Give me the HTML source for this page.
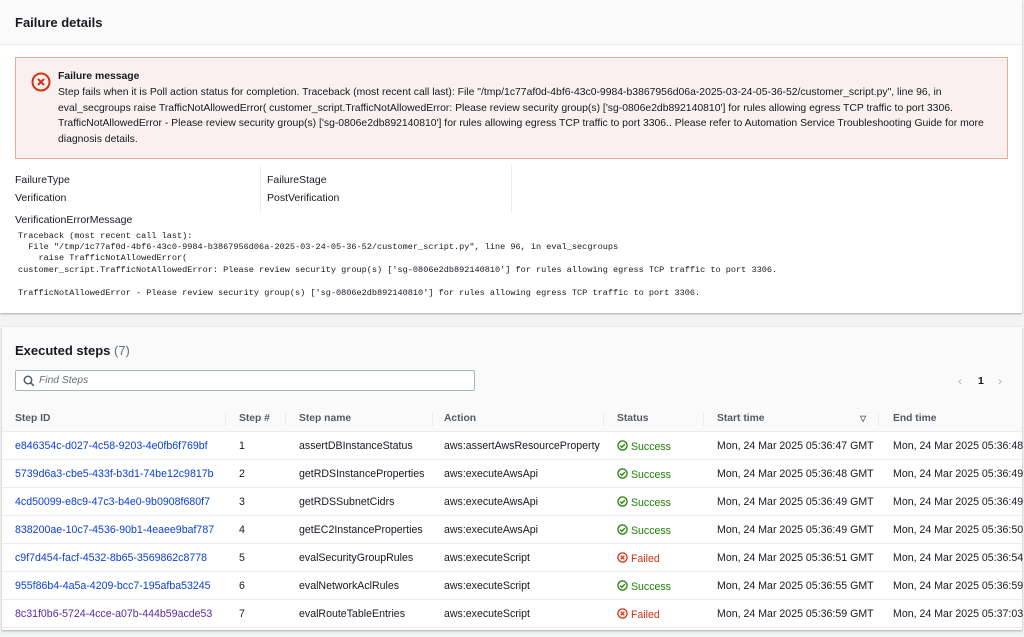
<!DOCTYPE html>
<html><head><meta charset="utf-8"><style>
*{margin:0;padding:0;box-sizing:border-box}
body{width:1024px;height:637px;background:#f2f3f3;font-family:"Liberation Sans",sans-serif;color:#16191f;position:relative;overflow:hidden;font-size:10.5px}
.abs{position:absolute;white-space:nowrap}
.p1{position:absolute;left:0;top:0;width:1022px;height:313px;background:#fff;box-shadow:0 1px 2px rgba(0,0,0,.3)}
.h1{position:absolute;left:0;top:0;width:100%;height:45px;background:#fafafa;border-bottom:1px solid #eaeded}
.fbox{position:absolute;left:15px;top:57px;width:993px;height:102px;background:#faf0ef;border:1px solid #eba89f}
.fbox div{position:absolute;left:42px;white-space:nowrap;font-size:10.4px;color:#16191f}
.mono{font-family:"Liberation Mono",monospace;font-size:8.55px;color:#16191f}
.p2{position:absolute;left:2px;top:327px;width:1020px;height:303px;background:#fff;box-shadow:0 1px 2px rgba(0,0,0,.3)}
.h2{position:absolute;left:0;top:0;width:100%;height:78px;background:#fafafa}
.th{position:absolute;top:78px;left:0;width:100%;height:27px;background:#fafafa;border-bottom:1px solid #eaeded}
.th span{position:absolute;top:8px;font-weight:bold;color:#545b64;font-size:10.3px}
.sep{position:absolute;top:7px;width:1px;height:14px;background:#eaeded}
.row{position:absolute;left:0;width:100%;height:28px;border-bottom:1px solid #eaeded}
.row span{position:absolute;top:8px;font-size:10.6px;white-space:nowrap}
a{color:#0a3ed8;text-decoration:none}
.ok{color:#1d8102}.bad{color:#d13212}
svg{vertical-align:-1px}
</style></head><body>
<div class="p1">
 <div class="h1"><div class="abs" style="left:15px;top:15px;font-size:13px;font-weight:bold">Failure details</div></div>
 <div class="fbox">
  <svg style="position:absolute;left:15px;top:14px" width="20" height="20" viewBox="0 0 20 20"><circle cx="10" cy="10" r="8.5" fill="none" stroke="#d13212" stroke-width="2"/><path d="M7 7l6 6M13 7l-6 6" stroke="#d13212" stroke-width="2"/></svg>
  <div style="top:13px;font-weight:bold">Failure message</div>
  <div style="top:29px">Step fails when it is Poll action status for completion. Traceback (most recent call last): File "/tmp/1c77af0d-4bf6-43c0-9984-b3867956d06a-2025-03-24-05-36-52/customer_script.py", line 96, in</div>
  <div style="top:45px">eval_secgroups raise TrafficNotAllowedError( customer_script.TrafficNotAllowedError: Please review security group(s) ['sg-0806e2db892140810'] for rules allowing egress TCP traffic to port 3306.</div>
  <div style="top:60px">TrafficNotAllowedError - Please review security group(s) ['sg-0806e2db892140810'] for rules allowing egress TCP traffic to port 3306.. Please refer to Automation Service Troubleshooting Guide for more</div>
  <div style="top:76px">diagnosis details.</div>
 </div>
 <div class="abs" style="left:260px;top:165px;width:1px;height:48px;background:#eaeded"></div>
 <div class="abs" style="left:511px;top:165px;width:1px;height:48px;background:#eaeded"></div>
 <div class="abs" style="left:15px;top:174px">FailureType</div>
 <div class="abs" style="left:267px;top:174px">FailureStage</div>
 <div class="abs" style="left:15px;top:192px">Verification</div>
 <div class="abs" style="left:267px;top:192px">PostVerification</div>
 <div class="abs" style="left:15px;top:214px">VerificationErrorMessage</div>
 <div class="abs mono" style="left:18px;top:231px">Traceback (most recent call last):</div>
 <div class="abs mono" style="left:18px;top:242px;white-space:pre">  File "/tmp/1c77af0d-4bf6-43c0-9984-b3867956d06a-2025-03-24-05-36-52/customer_script.py", line 96, in eval_secgroups</div>
 <div class="abs mono" style="left:18px;top:253px;white-space:pre">    raise TrafficNotAllowedError(</div>
 <div class="abs mono" style="left:18px;top:265px">customer_script.TrafficNotAllowedError: Please review security group(s) ['sg-0806e2db892140810'] for rules allowing egress TCP traffic to port 3306.</div>
 <div class="abs mono" style="left:18px;top:288px">TrafficNotAllowedError - Please review security group(s) ['sg-0806e2db892140810'] for rules allowing egress TCP traffic to port 3306.</div>
</div>
<div class="p2">
 <div class="h2">
  <div class="abs" style="left:13px;top:16px;font-size:13px;font-weight:bold">Executed steps <span style="font-weight:normal;color:#687078">(7)</span></div>
  <div class="abs" style="left:13px;top:43px;width:460px;height:21px;border:1px solid #aab7b8;background:#fff;border-radius:2px">
   <svg style="position:absolute;left:7px;top:4px" width="12" height="12" viewBox="0 0 12 12"><circle cx="5" cy="5" r="3.7" fill="none" stroke="#545b64" stroke-width="1.5"/><path d="M7.8 7.8l3 3" stroke="#545b64" stroke-width="1.6"/></svg>
   <span style="position:absolute;left:23px;top:4px;font-style:italic;color:#687078;font-size:10.3px">Find Steps</span>
  </div>
  <div class="abs" style="left:956px;top:47px;color:#aab7b8;font-size:12px">&#x2039;</div>
  <div class="abs" style="left:976px;top:48px;font-weight:bold;font-size:10.5px">1</div>
  <div class="abs" style="left:996px;top:47px;color:#aab7b8;font-size:12px">&#x203A;</div>
 </div>
 <div class="th">
  <span style="left:13px">Step ID</span><div class="sep" style="left:223px"></div>
  <span style="left:237px">Step #</span><div class="sep" style="left:283px"></div>
  <span style="left:297px">Step name</span><div class="sep" style="left:430px"></div>
  <span style="left:442px">Action</span><div class="sep" style="left:601px"></div>
  <span style="left:615px">Status</span><div class="sep" style="left:701px"></div>
  <span style="left:715px">Start time</span><span style="left:858px;font-size:8px;top:9px">&#x25BD;</span><div class="sep" style="left:876px"></div>
  <span style="left:891px">End time</span>
 </div>
 <div class="row" style="top:105px"><span style="left:13px"><a>e846354c-d027-4c58-9203-4e0fb6f769bf</a></span><span style="left:237px">1</span><span style="left:297px">assertDBInstanceStatus</span><span style="left:442px">aws:assertAwsResourceProperty</span><span class="ok" style="left:615px"><svg width="11" height="11" viewBox="0 0 12 12"><circle cx="6" cy="6" r="5" fill="none" stroke="#1d8102" stroke-width="1.4"/><path d="M3.5 6l1.8 1.8L8.6 4.4" fill="none" stroke="#1d8102" stroke-width="1.4"/></svg> Success</span><span style="left:715px">Mon, 24 Mar 2025 05:36:47 GMT</span><span style="left:891px">Mon, 24 Mar 2025 05:36:48 GMT</span></div>
 <div class="row" style="top:133px"><span style="left:13px"><a>5739d6a3-cbe5-433f-b3d1-74be12c9817b</a></span><span style="left:237px">2</span><span style="left:297px">getRDSInstanceProperties</span><span style="left:442px">aws:executeAwsApi</span><span class="ok" style="left:615px"><svg width="11" height="11" viewBox="0 0 12 12"><circle cx="6" cy="6" r="5" fill="none" stroke="#1d8102" stroke-width="1.4"/><path d="M3.5 6l1.8 1.8L8.6 4.4" fill="none" stroke="#1d8102" stroke-width="1.4"/></svg> Success</span><span style="left:715px">Mon, 24 Mar 2025 05:36:48 GMT</span><span style="left:891px">Mon, 24 Mar 2025 05:36:49 GMT</span></div>
 <div class="row" style="top:161px"><span style="left:13px"><a>4cd50099-e8c9-47c3-b4e0-9b0908f680f7</a></span><span style="left:237px">3</span><span style="left:297px">getRDSSubnetCidrs</span><span style="left:442px">aws:executeAwsApi</span><span class="ok" style="left:615px"><svg width="11" height="11" viewBox="0 0 12 12"><circle cx="6" cy="6" r="5" fill="none" stroke="#1d8102" stroke-width="1.4"/><path d="M3.5 6l1.8 1.8L8.6 4.4" fill="none" stroke="#1d8102" stroke-width="1.4"/></svg> Success</span><span style="left:715px">Mon, 24 Mar 2025 05:36:49 GMT</span><span style="left:891px">Mon, 24 Mar 2025 05:36:49 GMT</span></div>
 <div class="row" style="top:189px"><span style="left:13px"><a>838200ae-10c7-4536-90b1-4eaee9baf787</a></span><span style="left:237px">4</span><span style="left:297px">getEC2InstanceProperties</span><span style="left:442px">aws:executeAwsApi</span><span class="ok" style="left:615px"><svg width="11" height="11" viewBox="0 0 12 12"><circle cx="6" cy="6" r="5" fill="none" stroke="#1d8102" stroke-width="1.4"/><path d="M3.5 6l1.8 1.8L8.6 4.4" fill="none" stroke="#1d8102" stroke-width="1.4"/></svg> Success</span><span style="left:715px">Mon, 24 Mar 2025 05:36:49 GMT</span><span style="left:891px">Mon, 24 Mar 2025 05:36:50 GMT</span></div>
 <div class="row" style="top:217px"><span style="left:13px"><a>c9f7d454-facf-4532-8b65-3569862c8778</a></span><span style="left:237px">5</span><span style="left:297px">evalSecurityGroupRules</span><span style="left:442px">aws:executeScript</span><span class="bad" style="left:615px"><svg width="11" height="11" viewBox="0 0 12 12"><circle cx="6" cy="6" r="5" fill="none" stroke="#d13212" stroke-width="1.4"/><path d="M4 4l4 4M8 4l-4 4" stroke="#d13212" stroke-width="1.4"/></svg> Failed</span><span style="left:715px">Mon, 24 Mar 2025 05:36:51 GMT</span><span style="left:891px">Mon, 24 Mar 2025 05:36:54 GMT</span></div>
 <div class="row" style="top:245px"><span style="left:13px"><a>955f86b4-4a5a-4209-bcc7-195afba53245</a></span><span style="left:237px">6</span><span style="left:297px">evalNetworkAclRules</span><span style="left:442px">aws:executeScript</span><span class="ok" style="left:615px"><svg width="11" height="11" viewBox="0 0 12 12"><circle cx="6" cy="6" r="5" fill="none" stroke="#1d8102" stroke-width="1.4"/><path d="M3.5 6l1.8 1.8L8.6 4.4" fill="none" stroke="#1d8102" stroke-width="1.4"/></svg> Success</span><span style="left:715px">Mon, 24 Mar 2025 05:36:55 GMT</span><span style="left:891px">Mon, 24 Mar 2025 05:36:59 GMT</span></div>
 <div class="row" style="top:273px"><span style="left:13px"><a style="color:#5b2a9e">8c31f0b6-5724-4cce-a07b-444b59acde53</a></span><span style="left:237px">7</span><span style="left:297px">evalRouteTableEntries</span><span style="left:442px">aws:executeScript</span><span class="bad" style="left:615px"><svg width="11" height="11" viewBox="0 0 12 12"><circle cx="6" cy="6" r="5" fill="none" stroke="#d13212" stroke-width="1.4"/><path d="M4 4l4 4M8 4l-4 4" stroke="#d13212" stroke-width="1.4"/></svg> Failed</span><span style="left:715px">Mon, 24 Mar 2025 05:36:59 GMT</span><span style="left:891px">Mon, 24 Mar 2025 05:37:03 GMT</span></div>
</div>
</body></html>
